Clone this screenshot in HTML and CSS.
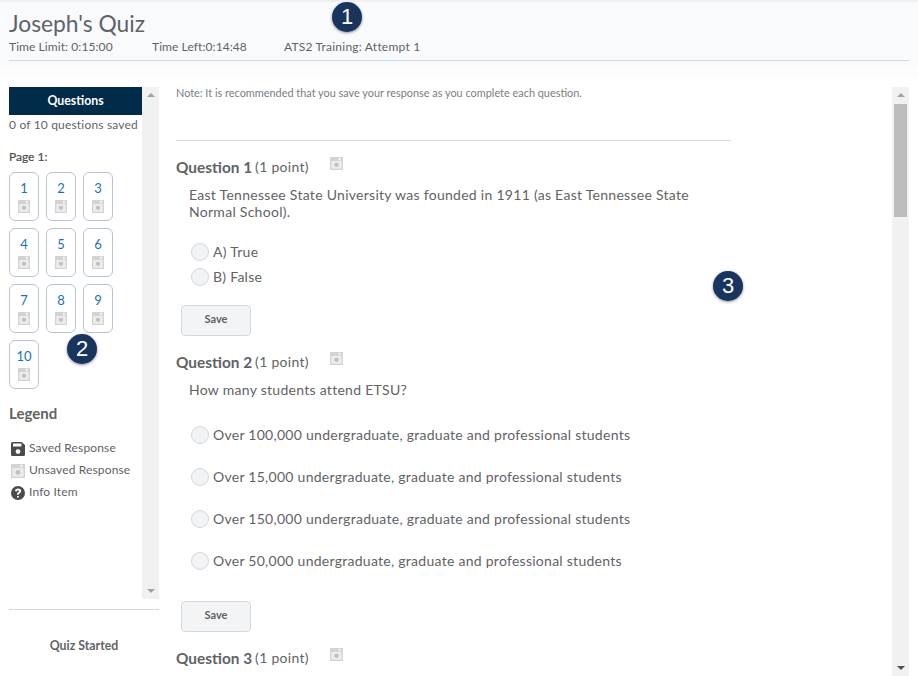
FILE: index.html
```html
<!DOCTYPE html>
<html lang="en">
<head>
<meta charset="utf-8">
<title>Joseph's Quiz</title>
<link rel="stylesheet" href="styles.css">
</head>
<body>
<svg class="defs" width="0" height="0" aria-hidden="true">
  <defs>
    <symbol id="disk" viewBox="0 0 14 14">
      <path d="M1.5 0H10.5L14 3V12.5A1.5 1.5 0 0 1 12.5 14H1.5A1.5 1.5 0 0 1 0 12.5V1.5A1.5 1.5 0 0 1 1.5 0ZM2 1.6V4.6H10.4V1.6ZM7 7.2A2.4 2.4 0 1 0 7 12A2.4 2.4 0 1 0 7 7.2Z" fill-rule="evenodd"/>
    </symbol>
    <symbol id="unsaved" viewBox="0 0 13 14" preserveAspectRatio="none">
      <path d="M0.5 0H12.5A0.5 0.5 0 0 1 13 0.5V13.5A0.5 0.5 0 0 1 12.5 14H0.5A0.5 0.5 0 0 1 0 13.5V0.5A0.5 0.5 0 0 1 0.5 0Z" fill="#d2d3d4"/>
      <path d="M1.3 4.2H11.7V12.7H1.3Z" fill="#ececed"/>
      <path d="M8.6 1H10.6V3.4H8.6Z" fill="#f6f6f7"/>
      <circle cx="6.5" cy="8.4" r="2.3" fill="#bfc0c1"/>
    </symbol>
    <symbol id="help" viewBox="0 0 14 14">
      <path d="M7 0A7 7 0 1 0 7 14A7 7 0 1 0 7 0ZM7.9 11.6H6V9.9H7.9ZM9.9 6C9.5 6.8 8.9 7.1 8.4 7.5C8 7.8 7.9 8.1 7.9 8.8H6V8.4C6 7.3 6.4 6.8 7.1 6.3C7.6 5.9 8 5.7 8 5.1C8 4.6 7.6 4.3 7 4.3C6.3 4.3 5.9 4.7 5.8 5.4L3.9 5.1C4.1 3.4 5.3 2.5 7.1 2.5C8.9 2.5 10.2 3.5 10.2 5C10.2 5.4 10.1 5.7 9.9 6Z" fill-rule="evenodd"/>
    </symbol>
  </defs>
</svg>
<div class="page">
  <header class="header">
    <h1 class="title">Joseph's Quiz</h1>
    <div class="meta">
      <span class="meta-limit">Time Limit: 0:15:00</span>
      <span class="meta-left">Time Left:0:14:48</span>
      <span class="meta-attempt">ATS2 Training: Attempt 1</span>
    </div>
  </header>
  <span class="badge badge-one">1</span>
  <span class="badge badge-two">2</span>
  <span class="badge badge-three">3</span>
  <main class="main">
    <aside class="side">
      <div class="side-scroll">
        <nav class="side-body">
          <div class="side-head">Questions</div>
          <p class="saved-count">0 of 10 questions saved</p>
          <h2 class="page-label">Page 1:</h2>
          <div class="tiles">
            <a class="tile">1<svg class="disk-icon"><use href="#unsaved"/></svg></a>
            <a class="tile">2<svg class="disk-icon"><use href="#unsaved"/></svg></a>
            <a class="tile">3<svg class="disk-icon"><use href="#unsaved"/></svg></a>
            <a class="tile">4<svg class="disk-icon"><use href="#unsaved"/></svg></a>
            <a class="tile">5<svg class="disk-icon"><use href="#unsaved"/></svg></a>
            <a class="tile">6<svg class="disk-icon"><use href="#unsaved"/></svg></a>
            <a class="tile">7<svg class="disk-icon"><use href="#unsaved"/></svg></a>
            <a class="tile">8<svg class="disk-icon"><use href="#unsaved"/></svg></a>
            <a class="tile">9<svg class="disk-icon"><use href="#unsaved"/></svg></a>
            <a class="tile">10<svg class="disk-icon"><use href="#unsaved"/></svg></a>
          </div>
          <h2 class="legend-title">Legend</h2>
          <ul class="legend">
            <li><svg class="legend-icon dark"><use href="#disk"/></svg>Saved Response</li>
            <li><svg class="legend-icon"><use href="#unsaved"/></svg>Unsaved Response</li>
            <li><svg class="legend-icon dark"><use href="#help"/></svg>Info Item</li>
          </ul>
        </nav>
        <div class="scrollbar">
          <span class="arrow-up"></span>
          <span class="arrow-down"></span>
        </div>
      </div>
      <div class="side-foot">Quiz Started</div>
    </aside>
    <section class="content">
      <div class="questions">
        <p class="note">Note: It is recommended that you save your response as you complete each question.</p>
        <article class="question q-one">
          <h3 class="q-title"><b>Question 1</b><span class="q-points">(1 point)</span><svg class="q-icon"><use href="#unsaved"/></svg></h3>
          <p class="q-text">East Tennessee State University was founded in 1911 (as East Tennessee State Normal School).</p>
          <div class="options tight">
            <label class="option"><span class="radio"></span>A) True</label>
            <label class="option"><span class="radio"></span>B) False</label>
          </div>
          <button class="save">Save</button>
        </article>
        <article class="question">
          <h3 class="q-title"><b>Question 2</b><span class="q-points">(1 point)</span><svg class="q-icon"><use href="#unsaved"/></svg></h3>
          <p class="q-text">How many students attend ETSU?</p>
          <div class="options wide">
            <label class="option"><span class="radio"></span>Over 100,000 undergraduate, graduate and professional students</label>
            <label class="option"><span class="radio"></span>Over 15,000 undergraduate, graduate and professional students</label>
            <label class="option"><span class="radio"></span>Over 150,000 undergraduate, graduate and professional students</label>
            <label class="option"><span class="radio"></span>Over 50,000 undergraduate, graduate and professional students</label>
          </div>
          <button class="save">Save</button>
        </article>
        <article class="question">
          <h3 class="q-title"><b>Question 3</b><span class="q-points">(1 point)</span><svg class="q-icon"><use href="#unsaved"/></svg></h3>
        </article>
      </div>
      <div class="scrollbar main-bar">
        <span class="arrow-up"></span>
        <span class="thumb"></span>
        <span class="arrow-down"></span>
      </div>
    </section>
  </main>
</div>
</body>
</html>
```
FILE: styles.css
```css
* { box-sizing: border-box; }
html, body { margin: 0; height: 100%; }
body {
  font-family: Lato, "Open Sans", sans-serif;
  color: #5f6366;
  background: #fff;
  overflow: hidden;
}
.defs { position: absolute; }
.page {
  position: relative;
  width: 918px;
  height: 676px;
  overflow: hidden;
  background: linear-gradient(#f9fafc 0, #f9fafc 60px, #fff 82px);
  border-top: 2px solid #f0f0f2;
}
.header {
  margin: 0 9px;
  height: 59px;
  border-bottom: 1px solid #d3d9e3;
}
.title {
  margin: 0;
  padding-top: 7px;
  font-size: 22.8px;
  line-height: 28px;
  font-weight: 400;
  color: #5f6366;
}
.meta {
  display: flex;
  margin-top: 2px;
  font-size: 12px;
  line-height: 16px;
  letter-spacing: 0.08px;
}
.meta-limit { width: 143px; }
.meta-left { width: 132px; }
.meta-attempt { letter-spacing: .22px; }
.badge {
  position: absolute;
  display: flex;
  align-items: center;
  justify-content: center;
  width: 30px;
  height: 30px;
  border-radius: 50%;
  background: #17355f;
  color: #fff;
  font-family: "Liberation Sans", sans-serif;
  font-size: 22px;
  box-shadow: 0 1px 3px rgba(0,0,0,.45);
}
.badge-one { left: 332px; top: 0; }
.badge-two { left: 67px; top: 332px; }
.badge-three { left: 713px; top: 269px; }
.main {
  display: flex;
  height: 615px;
  padding: 26px 9px 0;
}
.side { width: 150px; flex: none; }
.side-scroll {
  display: flex;
  height: 512px;
}
.side-body { flex: 1; min-width: 0; }
.side-head {
  height: 28px;
  background: #002b49;
  color: #fff;
  font-size: 12.3px;
  font-weight: 700;
  line-height: 28px;
  text-align: center;
}
.saved-count {
  margin: 2px 0 0;
  font-size: 12px;
  line-height: 16px;
  letter-spacing: .18px;
  white-space: nowrap;
}
.page-label {
  margin: 16px 0 0;
  font-size: 12px;
  line-height: 16px;
  font-weight: 400;
  color: #494c4e;
  -webkit-text-stroke: .2px #494c4e;
}
.tiles {
  display: grid;
  grid-template-columns: repeat(3, 30px);
  grid-auto-rows: 49px;
  gap: 7px 7px;
  margin-top: 7px;
}
.tile {
  display: flex;
  flex-direction: column;
  align-items: center;
  padding-top: 7px;
  border: 1px solid #b8c3d8;
  border-radius: 6px;
  color: #1a6fc4;
  font-size: 13px;
  line-height: 16px;
}
.disk-icon {
  width: 12px;
  height: 13px;
  margin-top: 4px;
}
.legend-title {
  margin: 14px 0 0;
  font-size: 15px;
  line-height: 20px;
  font-weight: 700;
  color: #5f6366;
}
.legend {
  margin: 14px 0 0;
  padding: 0;
  list-style: none;
  font-size: 12px;
  line-height: 22px;
  letter-spacing: .15px;
}
.legend li {
  display: flex;
  align-items: center;
  white-space: nowrap;
}
.legend-icon {
  width: 14px;
  height: 14px;
  margin: 2px 4px 0 2px;
  flex: none;
}
.dark { fill: #494c4e; }
.scrollbar {
  position: relative;
  width: 17px;
  flex: none;
  background: #f1f1f1;
}
.arrow-up, .arrow-down {
  position: absolute;
  left: 5px;
  width: 0;
  height: 0;
  border-left: 4px solid transparent;
  border-right: 4px solid transparent;
}
.arrow-up { top: 6px; border-bottom: 4px solid #a3a3a3; }
.arrow-down { bottom: 6px; border-top: 4px solid #a3a3a3; }
.main-bar .arrow-down { border-top-color: #505050; }
.thumb {
  position: absolute;
  top: 17px;
  left: 2px;
  width: 13px;
  height: 113px;
  background: #bdbdbd;
}
.side-foot {
  margin-top: 10px;
  padding-top: 28px;
  border-top: 1px solid #d3d9e3;
  font-size: 12.3px;
  line-height: 16px;
  font-weight: 700;
  text-align: center;
}
.content {
  display: flex;
  flex: 1;
  min-width: 0;
}
.questions {
  flex: 1;
  min-width: 0;
  padding-left: 17px;
}
.note {
  width: 555px;
  height: 54px;
  margin: 0;
  border-bottom: 1px solid #d3d9e3;
  font-size: 10.9px;
  line-height: 12px;
  color: #7a7e81;
}
.question { width: 555px; }
.q-one { margin-top: 16px; }
.q-title {
  display: flex;
  align-items: flex-start;
  margin: 0;
  font-size: 14px;
  line-height: 20px;
  font-weight: 400;
}
.q-title b { font-weight: 700; margin-right: 3px; font-size: 15.4px; }
.q-points { letter-spacing: .3px; }
.q-icon {
  width: 13px;
  height: 13px;
  margin: 0 0 0 21px;
}
.q-text {
  margin: 9px 0 0;
  padding-left: 13px;
  font-size: 14px;
  line-height: 17px;
  letter-spacing: .28px;
}
.options { padding-left: 15px; }
.option {
  display: flex;
  align-items: center;
  font-size: 14px;
  line-height: 18px;
  letter-spacing: .27px;
  white-space: nowrap;
}
.radio {
  width: 18px;
  height: 18px;
  margin-right: 4px;
  flex: none;
  border: 1px solid #d3d7de;
  border-radius: 50%;
  background: #f2f3f5;
}
.tight { margin-top: 23px; }
.tight .option + .option { margin-top: 7px; }
.wide { margin-top: 28px; }
.wide .option + .option { margin-top: 24px; }
.save {
  display: block;
  width: 70px;
  height: 31px;
  margin: 19px 0 16px 5px;
  padding: 0 0 4px;
  border: 1px solid #d3d9e3;
  border-radius: 4px;
  background: #f3f4f6;
  color: #5f6366;
  font-family: inherit;
  font-size: 11px;
  font-weight: 700;
}
.wide + .save { margin-top: 31px; }
```
